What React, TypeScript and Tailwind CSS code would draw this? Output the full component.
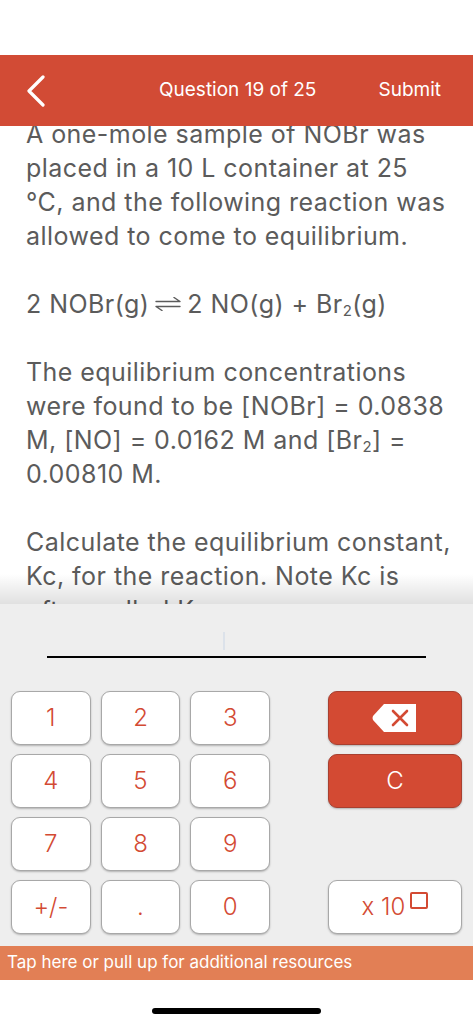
const font = { fontFamily: 'Inter, "Liberation Sans", Arial, sans-serif' };

const KeyButton = ({ label }: { label: string }) => (
  <button className="h-[54px] rounded-[9px] bg-white border border-[#a8a8a8] shadow-[0_1px_2px_rgba(0,0,0,0.25)] text-[#d34a33] text-[24px] font-light flex items-center justify-center">
    {label}
  </button>
);

const Sub = ({ children }: { children: string }) => (
  <sub className="text-[15px] align-baseline relative top-[3px]">{children}</sub>
);

// equilibrium harpoons
const EqArrow = () => (
  <svg className="inline-block mx-[6px] relative top-[-2px]" width="26" height="14" viewBox="0 0 26 14" fill="none">
    <path d="M1 4.5 H25 L19 0.5" stroke="#5b5b5b" strokeWidth="1.4" strokeLinecap="round" strokeLinejoin="round" />
    <path d="M25 9.5 H1 L7 13.5" stroke="#5b5b5b" strokeWidth="1.4" strokeLinecap="round" strokeLinejoin="round" />
  </svg>
);

const App = () => {
  const keys = ['1', '2', '3', '4', '5', '6', '7', '8', '9', '+/-', '.', '0'];

  return (
    <div className="w-[473px] h-[1024px] bg-white flex flex-col overflow-hidden" style={font}>
      {/* status bar space */}
      <div className="h-[55px] shrink-0" />

      {/* Header */}
      <div className="relative z-10 h-[71px] shrink-0 bg-[#d24b35] flex items-center text-white">
        <svg className="ml-[25px] w-[22px] h-[32px]" viewBox="0 0 22 32" fill="none">
          <path d="M18 2 L4 16 L18 30" stroke="white" strokeWidth="3.2" strokeLinecap="round" strokeLinejoin="round" />
        </svg>
        <div className="flex-1 text-center text-[19px] pl-[50px]">Question 19 of 25</div>
        <div className="text-[19px] mr-[32px]">Submit</div>
      </div>

      {/* Question */}
      <div className="relative h-[478px] shrink-0 overflow-hidden">
        <div className="mt-[-9px] px-[26px] text-[25px] tracking-[0.45px] leading-[34px] text-[#5b5b5b] whitespace-nowrap">
          <p>
            A one-mole sample of NOBr was<br />
            placed in a 10 L container at 25<br />
            °C, and the following reaction was<br />
            allowed to come to equilibrium.
          </p>
          <p className="mt-[34px]">
            2 NOBr(g)<EqArrow />2 NO(g) + Br<Sub>2</Sub>(g)
          </p>
          <p className="mt-[34px]">
            The equilibrium concentrations<br />
            were found to be [NOBr] = 0.0838<br />
            M, [NO] = 0.0162 M and [Br<Sub>2</Sub>] =<br />
            0.00810 M.
          </p>
          <p className="mt-[34px]">
            Calculate the equilibrium constant,<br />
            Kc, for the reaction. Note Kc is<br />
            often called K.
          </p>
        </div>
        <div className="absolute bottom-0 left-0 right-0 h-[30px] bg-gradient-to-b from-transparent to-[rgba(0,0,0,0.12)]" />
      </div>

      {/* Keypad */}
      <div className="h-[342px] shrink-0 bg-[#eeeeee] flex flex-col">
        <div className="h-[54px] mx-[47px] border-b-2 border-black flex justify-center items-end pb-[6px]">
          <div className="w-[2px] h-[18px] bg-[#dce2ea] mr-[26px]" />
        </div>
        <div className="mt-[33px] px-[11px] flex justify-between">
          <div className="grid grid-cols-3 gap-x-[10px] gap-y-[9px] w-[259px]">
            {keys.map((k) => (
              <KeyButton key={k} label={k} />
            ))}
          </div>
          <div className="w-[134px] flex flex-col gap-[9px]">
            <button className="h-[54px] rounded-[9px] bg-[#d34a33] border border-[#a84030] shadow-[0_1px_2px_rgba(0,0,0,0.25)] flex items-center justify-center">
              <svg width="46" height="30" viewBox="0 0 46 30">
                <path d="M12 1 H44 V29 H12 L1 17 Q0 15 1 13 Z" fill="white" />
                <path d="M21 8 L35 22 M35 8 L21 22" stroke="#d34a33" strokeWidth="2.6" strokeLinecap="round" />
              </svg>
            </button>
            <button className="h-[54px] rounded-[9px] bg-[#d34a33] border border-[#a84030] shadow-[0_1px_2px_rgba(0,0,0,0.25)] text-white text-[24px] font-light flex items-center justify-center">
              C
            </button>
            <div className="h-[54px]" />
            <button className="h-[54px] rounded-[9px] bg-white border border-[#a8a8a8] shadow-[0_1px_2px_rgba(0,0,0,0.25)] text-[#d34a33] flex items-center justify-center">
              <span className="text-[24px] font-light">x 10</span>
              <span className="ml-[5px] mb-[14px] w-[18px] h-[17px] border-2 border-[#d34a33] rounded-[2px]" />
            </button>
          </div>
        </div>
      </div>

      {/* Resources bar */}
      <div className="h-[34px] shrink-0 bg-[#e27f55] text-white text-[17px] flex items-center px-[7px]">
        Tap here or pull up for additional resources
      </div>

      <div className="flex-1 flex items-end justify-center pb-[10px]">
        <div className="w-[169px] h-[6px] rounded-full bg-black" />
      </div>
    </div>
  );
};

export default App;
